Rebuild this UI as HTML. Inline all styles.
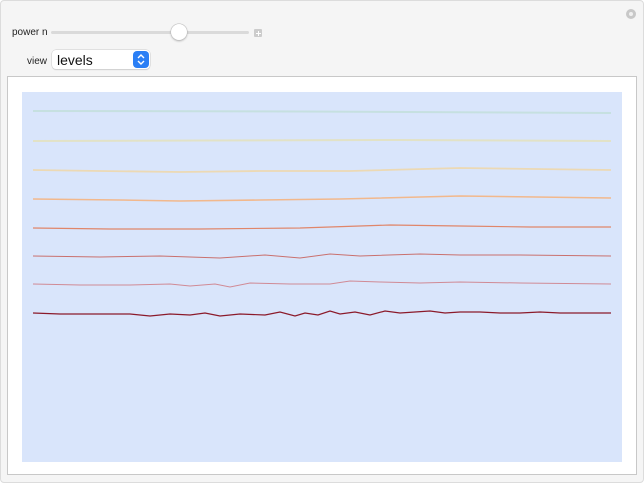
<!DOCTYPE html>
<html><head><meta charset="utf-8"><style>
body{margin:0;width:644px;height:483px;background:#fff;font-family:"Liberation Sans",sans-serif;overflow:hidden}
.panel{position:absolute;left:0;top:0;width:642px;height:481px;background:#f5f5f5;border:1px solid #dcdcdc;border-radius:4px}
.lbl{position:absolute;font-size:10px;color:#222}
.track{position:absolute;left:51px;top:31px;width:198px;height:3px;background:#dadada;border-radius:2px}
.knob{position:absolute;left:171px;top:24px;width:16px;height:16px;border-radius:50%;background:#fff;box-shadow:0 0 0 .5px #bbb,0 1px 2px rgba(0,0,0,.3)}
.plus{position:absolute;left:254px;top:29px;width:8px;height:8px;background:#ccc;border-radius:1px}
.plus:before{content:"";position:absolute;left:1.5px;top:3.5px;width:5px;height:1px;background:#fff}
.plus:after{content:"";position:absolute;left:3.5px;top:1.5px;width:1px;height:5px;background:#fff}
.sel{position:absolute;left:52px;top:50px;width:98px;height:19px;background:#fff;border-radius:4px;box-shadow:0 0 0 .5px #ccc,0 1px 1px rgba(0,0,0,.15)}
.sel span{position:absolute;left:5px;top:2px;font-size:14px;color:#111}
.arr{position:absolute;right:1px;top:1px;width:16px;height:17px;background:#2b7ff5;border-radius:4px}
.box{position:absolute;left:7px;top:76px;width:628px;height:397px;background:#fff;border:1px solid #c8c8c8}
.plot{position:absolute;left:22px;top:92px;width:600px;height:370px;background:#d9e5fb}
.gear{position:absolute;left:626px;top:9px;width:10px;height:10px;border-radius:50%;background:#c8c8c8}
.gear:after{content:"";position:absolute;left:3px;top:3px;width:4px;height:4px;border-radius:50%;background:#f0f0f0}
</style></head><body>
<div class="panel"></div>
<div class="gear"></div>
<div class="lbl" style="left:12px;top:27px">power n</div>
<div class="track"></div><div class="knob"></div><div class="plus"></div>
<div class="lbl" style="left:27px;top:56px">view</div>
<div class="sel"><span>levels</span><div class="arr"><svg width="16" height="17"><path d="M5 7 L8 4 L11 7 M5 10 L8 13 L11 10" stroke="#fff" stroke-width="1.4" fill="none"/></svg></div></div>
<div class="box"></div>
<div class="plot"></div>
<svg style="position:absolute;left:0;top:0" width="644" height="483" fill="none">
<path d="M33 111 L300 111.5 L611 113" stroke="#c6e0e0" stroke-width="2"/>
<path d="M33 141 L200 140.5 L400 140 L611 141" stroke="#e2e2c6" stroke-width="2"/>
<path d="M33 170 L100 171 L180 172 L260 171 L350 171 L460 168 L611 170" stroke="#ecd9b4" stroke-width="1.8"/>
<path d="M33 199 L120 200 L180 201 L260 200 L340 199 L460 196 L611 198" stroke="#f2b88c" stroke-width="1.5"/>
<path d="M33 228 L110 229 L200 229 L300 228 L390 225 L460 226 L530 227 L611 227" stroke="#e0866a" stroke-width="1.2"/>
<path d="M33 256 L100 257 L160 256 L220 258 L265 255 L300 258 L330 254 L360 256 L420 254 L460 255 L520 255 L611 256" stroke="#c9706e" stroke-width="1"/>
<path d="M33 284 L80 285 L130 285 L170 284 L190 286 L215 284 L230 287 L250 283 L290 284 L330 284 L350 281 L380 282 L420 283 L460 282 L520 283 L611 284" stroke="#d08a95" stroke-width="1"/>
<path d="M33 313 L60 314 L100 314 L130 314 L150 316 L170 314 L190 315 L205 313 L220 316 L240 314 L265 315 L280 312 L295 316 L305 313 L318 315 L330 311 L340 314 L355 312 L370 315 L385 311 L400 313 L415 312 L430 311 L445 313 L460 312 L480 312 L500 313 L520 313 L540 312 L560 313 L611 313" stroke="#8b1a2a" stroke-width="1.2"/>
</svg>
</body></html>
